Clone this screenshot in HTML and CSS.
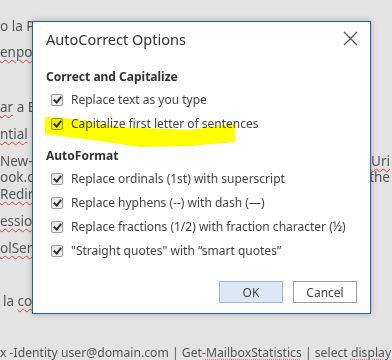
FILE: index.html
```html
<!DOCTYPE html>
<html lang="en">
<head>
    <meta charset="UTF-8">
    <title>AutoCorrect Options</title>
    <link rel="stylesheet" href="styles.css">
</head>
<body>
    <div class="doc">
        <div class="line l1">o la Pr</div>
        <div class="line l2"><span class="sq">enpolic</span></div>
        <div class="line l3"><span class="sq">ar</span> a Ex</div>
        <div class="line l4"><span class="sq">ntial</span> =</div>
        <div class="line tight l5 split"><span>New-PS</span><span class="sq">Uri</span></div>
        <div class="line tight split"><span>ook.of</span><span>the</span></div>
        <div class="line l7"><span class="sq">Redire</span></div>
        <div class="line l8"><span class="sq">ession</span></div>
        <div class="line l9"><span class="sq">olServ</span></div>
        <div class="line l10">la <span class="sq">con</span></div>
        <div class="line l11">x -Identity user@domain.com | Get-<span class="dot">MailboxStatistics</span> | select <span class="dot">displayname</span></div>
    </div>

    <div class="dialog">
        <div class="dialog-head">
            <h1>AutoCorrect Options</h1>
            <svg class="close" width="15" height="15" viewBox="0 0 15 15"><path d="M1 1 L14 14 M14 1 L1 14" stroke="#555" stroke-width="1.3" fill="none"/></svg>
        </div>

        <h2>Correct and Capitalize</h2>
        <div class="opts">
            <div class="opt"><span class="box"></span>Replace text as you type</div>
            <div class="opt"><span class="box"></span>Capitalize first letter of sentences</div>
        </div>

        <h2 class="second">AutoFormat</h2>
        <div class="opts">
            <div class="opt"><span class="box"></span>Replace ordinals (1st) with superscript</div>
            <div class="opt"><span class="box"></span>Replace hyphens (--) with dash (—)</div>
            <div class="opt"><span class="box"></span>Replace fractions (1/2) with fraction character (½)</div>
            <div class="opt"><span class="box"></span>"Straight quotes" with “smart quotes”</div>
        </div>

        <div class="buttons">
            <button class="btn primary">OK</button>
            <button class="btn">Cancel</button>
        </div>
    </div>

    <svg class="marker" width="392" height="360" viewBox="0 0 392 360">
        <path d="M45 117 L75 119 L120 127 L190 130 L230 124 L236 125 L235 142 L190 146 L140 147 L100 141 L60 136 L45 134 Z" fill="#ffff00"/>
    </svg>
</body>
</html>
```

FILE: styles.css
```css
body {
    margin: 0;
    width: 392px;
    height: 360px;
    overflow: hidden;
    background: #e3e3e3;
    font-family: "Noto Sans", "Open Sans", sans-serif;
    color: #444;
    position: relative;
}

.doc {
    font-size: 13.5px;
    color: #555;
}

.line {
    height: 18px;
    line-height: 18px;
    white-space: nowrap;
}

.line.tight {
    height: 16px;
    line-height: 16px;
}

.split {
    display: flex;
    justify-content: space-between;
    padding-right: 2px;
}

.l1 { margin-top: 17px; }
.l2 { margin-top: 8px; }
.l3 { margin-top: 37px; }
.l4 { margin-top: 9px; }
.l5 { margin-top: 10px; }
.l7 { margin-top: 0; }
.l8 { margin-top: 9px; }
.l9 { margin-top: 9px; }
.l10 { margin-top: 35px; padding-left: 3px; }
.l11 { margin-top: 34px; font-size: 12.2px; }

.sq {
    text-decoration: underline wavy #e04040;
    text-decoration-thickness: 1px;
    text-underline-offset: 2px;
}

.dot {
    text-decoration: underline dotted #d08080;
    text-underline-offset: 2px;
}

.dialog {
    position: absolute;
    left: 32px;
    top: 21px;
    width: 311px;
    height: 291px;
    padding: 0 13px;
    background: #fff;
    border: 1px solid #2f5ea8;
    box-shadow: 0 0 6px rgba(0, 0, 0, 0.25);
    display: flex;
    flex-direction: column;
}

.dialog-head {
    display: flex;
    justify-content: space-between;
    align-items: center;
    height: 33px;
}

.dialog-head h1 {
    margin: 0;
    font-size: 14.5px;
    font-weight: normal;
    color: #333;
}

.close {
    margin-right: -1px;
}

.dialog h2 {
    margin: 14px 0 0;
    font-size: 12px;
    font-weight: bold;
    color: #333;
    line-height: 16px;
}

.dialog h2.second {
    margin-top: 16px;
}

.opts {
    display: flex;
    flex-direction: column;
    gap: 8px;
    margin-top: 7px;
}

.opt {
    display: flex;
    align-items: center;
    gap: 8px;
    font-size: 12px;
    line-height: 16px;
    color: #444;
    padding-left: 5px;
    white-space: nowrap;
}

.box {
    width: 10px;
    height: 10px;
    border: 1px solid #9a9a9a;
    border-radius: 2px;
    background: #ececec;
    position: relative;
}

.box::after {
    content: "";
    position: absolute;
    left: 3px;
    top: 0px;
    width: 3px;
    height: 6px;
    border: solid #333;
    border-width: 0 2px 2px 0;
    transform: rotate(40deg);
}

.buttons {
    margin-top: auto;
    margin-bottom: 10px;
    display: flex;
    justify-content: flex-end;
    gap: 10px;
}

.btn {
    width: 64px;
    height: 22px;
    font-family: inherit;
    font-size: 12px;
    color: #444;
    background: #fff;
    border: 1px solid #a0a0a0;
    padding: 0;
}

.btn.primary {
    background: #dde8f7;
    border-color: #9bb9e2;
}

.marker {
    position: absolute;
    left: 0;
    top: 0;
    mix-blend-mode: multiply;
    pointer-events: none;
}
```
